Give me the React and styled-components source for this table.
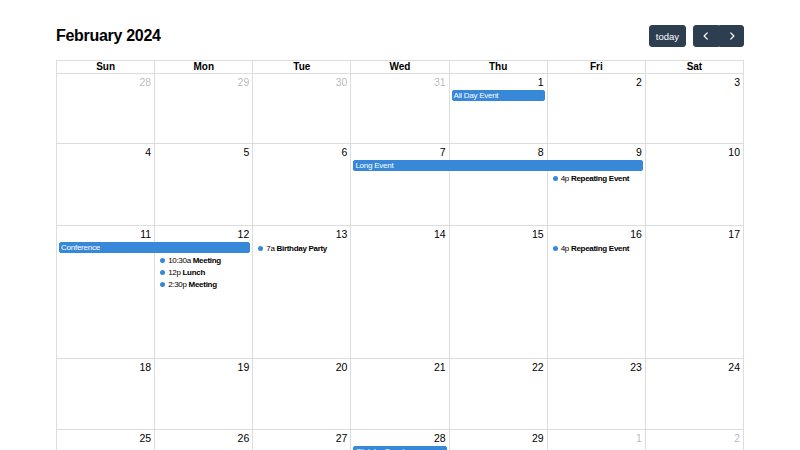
import React from "react";
import styled, { createGlobalStyle } from "styled-components";

const GlobalStyle = createGlobalStyle`
  body {
    margin: 0;
    background: #fff;
    font-family: "Liberation Sans", Arial, sans-serif;
    color: #000;
  }
`;

const Page = styled.div`
  padding: 25px 56px 0;
`;

const Toolbar = styled.div`
  display: flex;
  align-items: center;
  justify-content: space-between;
  height: 22px;
  margin-bottom: 13px;
`;

const Title = styled.h2`
  margin: 0;
  font-size: 16px;
  letter-spacing: -0.3px;
  font-weight: bold;
`;

const ButtonRow = styled.div`
  display: flex;
  gap: 7px;
`;

const ButtonGroup = styled.div`
  display: flex;
`;

const Button = styled.button`
  height: 22px;
  min-width: ${({ $w }) => $w || 33}px;
  padding: 0 6px;
  border: 1px solid #2c3e50;
  background: #2c3e50;
  color: #fff;
  font-family: inherit;
  font-size: 9.5px;
  border-radius: 3px;
  display: flex;
  align-items: center;
  justify-content: center;
  cursor: pointer;
  &.left {
    border-top-right-radius: 0;
    border-bottom-right-radius: 0;
  }
  &.right {
    border-top-left-radius: 0;
    border-bottom-left-radius: 0;
  }
`;

const Table = styled.div`
  border-top: 1px solid #ddd;
  border-left: 1px solid #ddd;
`;

const HeadRow = styled.div`
  display: grid;
  grid-template-columns: repeat(7, 1fr);
`;

const HeadCell = styled.div`
  border-right: 1px solid #ddd;
  border-bottom: 1px solid #ddd;
  text-align: center;
  font-size: 10px;
  font-weight: bold;
  line-height: 12px;
  height: 12px;
`;

const Week = styled.div`
  display: grid;
  grid-template-columns: repeat(7, 1fr);
  grid-template-rows: 16px repeat(4, 12px) 1fr;
  height: ${({ $h }) => $h}px;
  box-sizing: border-box;
`;

const Cell = styled.div`
  grid-row: 1 / -1;
  grid-column: ${({ $col }) => $col + 1};
  border-right: 1px solid #ddd;
  border-bottom: 1px solid #ddd;
`;

const DayNum = styled.div`
  grid-row: 1;
  grid-column: ${({ $col }) => $col + 1};
  text-align: right;
  padding: 2px 4px 0 0;
  font-size: 10.5px;
  line-height: 13px;
  color: ${({ $other }) => ($other ? "rgba(0,0,0,0.3)" : "#000")};
`;

const Bar = styled.div`
  grid-row: ${({ $lane }) => $lane + 1};
  grid-column: ${({ $col }) => $col + 1} / span ${({ $span }) => $span};
  margin: 0 3px 1px 2px;
  background: #3788d8;
  border: 1px solid #3788d8;
  border-radius: 2px;
  color: #fff;
  font-size: 8px;
  letter-spacing: -0.25px;
  line-height: 9px;
  padding-left: 1px;
  white-space: nowrap;
  overflow: hidden;
`;

const DotEvent = styled.div`
  grid-row: ${({ $lane }) => $lane + 1};
  grid-column: ${({ $col }) => $col + 1};
  display: flex;
  align-items: center;
  gap: 3px;
  padding-left: 5px;
  font-size: 8px;
  letter-spacing: -0.3px;
  white-space: nowrap;
  overflow: hidden;
  b {
    font-weight: bold;
  }
`;

const Dot = styled.span`
  width: 5px;
  height: 5px;
  border-radius: 50%;
  background: #3788d8;
  flex: none;
`;

const Chevron = ({ dir }) => (
  <svg width="10" height="10" viewBox="0 0 16 16" fill="none" stroke="#fff" strokeWidth="2" strokeLinecap="round" strokeLinejoin="round">
    {dir === "left" ? <path d="M10 3 5 8l5 5" /> : <path d="M6 3l5 5-5 5" />}
  </svg>
);

const days = ["Sun", "Mon", "Tue", "Wed", "Thu", "Fri", "Sat"];

const weeks = [
  {
    h: 70,
    nums: [[28, 1], [29, 1], [30, 1], [31, 1], [1], [2], [3]],
    bars: [{ col: 4, span: 1, lane: 1, title: "All Day Event" }],
    dots: [],
  },
  {
    h: 82,
    nums: [[4], [5], [6], [7], [8], [9], [10]],
    bars: [{ col: 3, span: 3, lane: 1, title: "Long Event" }],
    dots: [{ col: 5, lane: 2, time: "4p", title: "Repeating Event" }],
  },
  {
    h: 133,
    nums: [[11], [12], [13], [14], [15], [16], [17]],
    bars: [{ col: 0, span: 2, lane: 1, title: "Conference" }],
    dots: [
      { col: 2, lane: 1, time: "7a", title: "Birthday Party" },
      { col: 5, lane: 1, time: "4p", title: "Repeating Event" },
      { col: 1, lane: 2, time: "10:30a", title: "Meeting" },
      { col: 1, lane: 3, time: "12p", title: "Lunch" },
      { col: 1, lane: 4, time: "2:30p", title: "Meeting" },
    ],
  },
  {
    h: 71,
    nums: [[18], [19], [20], [21], [22], [23], [24]],
    bars: [],
    dots: [],
  },
  {
    h: 70,
    nums: [[25], [26], [27], [28], [29], [1, 1], [2, 1]],
    bars: [{ col: 3, span: 1, lane: 1, title: "Click for Google" }],
    dots: [],
  },
];

function App() {
  return (
    <>
      <GlobalStyle />
      <Page>
        <Toolbar>
          <Title>February 2024</Title>
          <ButtonRow>
            <Button $w={33}>today</Button>
            <ButtonGroup>
              <Button className="left" $w={26}>
                <Chevron dir="left" />
              </Button>
              <Button className="right" $w={25}>
                <Chevron dir="right" />
              </Button>
            </ButtonGroup>
          </ButtonRow>
        </Toolbar>
        <Table>
          <HeadRow>
            {days.map((d) => (
              <HeadCell key={d}>{d}</HeadCell>
            ))}
          </HeadRow>
          {weeks.map((w, i) => (
            <Week key={i} $h={w.h}>
              {w.nums.map((n, c) => (
                <Cell key={"c" + c} $col={c} />
              ))}
              {w.nums.map((n, c) => (
                <DayNum key={"n" + c} $col={c} $other={n[1]}>
                  {n[0]}
                </DayNum>
              ))}
              {w.bars.map((b) => (
                <Bar key={b.title} $col={b.col} $span={b.span} $lane={b.lane}>
                  {b.title}
                </Bar>
              ))}
              {w.dots.map((d, k) => (
                <DotEvent key={k} $col={d.col} $lane={d.lane}>
                  <Dot />
                  <span>
                    {d.time} <b>{d.title}</b>
                  </span>
                </DotEvent>
              ))}
            </Week>
          ))}
        </Table>
      </Page>
    </>
  );
}

export default App;
